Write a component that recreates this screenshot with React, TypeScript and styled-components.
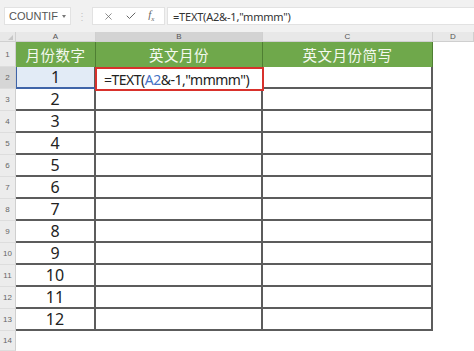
import styled, { createGlobalStyle } from 'styled-components';
import { X, Check } from 'lucide-react';

const GlobalStyle = createGlobalStyle`
  html, body {
    margin: 0;
    padding: 0;
    background: #ffffff;
    overflow: hidden;
  }
  body {
    font-family: "Noto Sans", "Noto Sans CJK SC", sans-serif;
  }
`;

const numbers = [1, 2, 3, 4, 5, 6, 7, 8, 9, 10, 11, 12];

export default function App() {
  return (
    <>
      <GlobalStyle />
      <Page>
        <Toolbar>
          <NameBox>
            <span>COUNTIF</span>
            <Caret />
          </NameBox>
          <Grip>⋮</Grip>
          <FuncBox>
            <X size={11} strokeWidth={1.6} color="#666" />
            <Check size={12} strokeWidth={2} color="#666" />
            <Fx>
              f<sub>x</sub>
            </Fx>
          </FuncBox>
          <FormulaInput>=TEXT(A2&amp;-1,"mmmm")</FormulaInput>
        </Toolbar>

        <Sheet>
          <Corner>
            <CornerMark />
          </Corner>
          <ColHeader>A</ColHeader>
          <ColHeader selected>B</ColHeader>
          <ColHeader>C</ColHeader>
          <ColHeader>D</ColHeader>

          <RowHeader>1</RowHeader>
          <TitleCell>月份数字</TitleCell>
          <TitleCell>英文月份</TitleCell>
          <TitleCell>英文月份简写</TitleCell>
          <EmptyCell />

          {numbers.map((n, i) => (
            <Row key={n} n={n} first={i === 0} />
          ))}

          <RowHeader>14</RowHeader>
          <EmptyCell />
          <EmptyCell />
          <EmptyCell />
          <EmptyCell />
        </Sheet>
      </Page>
    </>
  );
}

const Row = ({ n, first }: { n: number; first: boolean }) => (
  <>
    <RowHeader selected={first}>{n + 1}</RowHeader>
    <NumCell referenced={first}>{n}</NumCell>
    {first ? (
      <EditCell>
        =TEXT(<Ref>A2</Ref>&amp;-1,"mmmm")
      </EditCell>
    ) : (
      <DataCell />
    )}
    <DataCell />
    <EmptyCell />
  </>
);

const Page = styled.div`
  width: 474px;
  height: 351px;
  display: flex;
  flex-direction: column;
  overflow: hidden;
`;

const Toolbar = styled.div`
  height: 32px;
  flex-shrink: 0;
  display: flex;
  align-items: center;
  background: #f1f1f1;
  padding: 0 0 0 4px;
  box-sizing: border-box;
`;

const NameBox = styled.div`
  width: 67px;
  height: 18px;
  display: flex;
  align-items: center;
  justify-content: space-between;
  background: #ffffff;
  border: 1px solid #e2e2e2;
  box-sizing: border-box;
  padding: 0 4px 0 4px;
  font-family: "Liberation Sans", sans-serif;
  font-size: 11px;
  color: #555;
`;

const Caret = styled.span`
  width: 0;
  height: 0;
  border-left: 2.5px solid transparent;
  border-right: 2.5px solid transparent;
  border-top: 3px solid #777;
`;

const Grip = styled.span`
  width: 21px;
  text-align: center;
  color: #c4c4c4;
  font-size: 10px;
`;

const FuncBox = styled.div`
  width: 73px;
  height: 18px;
  display: flex;
  align-items: center;
  justify-content: space-around;
  background: #ffffff;
  border: 1px solid #e2e2e2;
  box-sizing: border-box;
  padding: 0 4px;
`;

const Fx = styled.span`
  font-family: "Liberation Serif", serif;
  font-style: italic;
  font-size: 11px;
  color: #666;

  sub {
    font-size: 7px;
  }
`;

const FormulaInput = styled.div`
  flex: 1;
  height: 18px;
  margin-left: 2px;
  display: flex;
  align-items: center;
  padding-left: 5px;
  background: #ffffff;
  border: 1px solid #e2e2e2;
  border-right: none;
  box-sizing: border-box;
  font-family: "Noto Sans", sans-serif;
  font-size: 11px;
  letter-spacing: -0.2px;
  color: #333;
`;

const Sheet = styled.div`
  flex: 1;
  display: grid;
  grid-template-columns: 16px 80px 167px 170px 1fr;
  grid-template-rows: 10px 25px repeat(12, 22px) 1fr;
`;

const Corner = styled.div`
  background: #e8e8e8;
  border-right: 1px solid #d0d0d0;
  border-bottom: 1px solid #d0d0d0;
  box-sizing: border-box;
  position: relative;
`;

const CornerMark = styled.span`
  position: absolute;
  right: 2px;
  bottom: 1px;
  width: 0;
  height: 0;
  border-left: 5px solid transparent;
  border-bottom: 5px solid #c6c6c6;
`;

const ColHeader = styled.div<{ selected?: boolean }>`
  background: ${({ selected }) => (selected ? '#d3d3d3' : '#e8e8e8')};
  border-right: 1px solid #d0d0d0;
  border-bottom: 1px solid #cfcfcf;
  box-sizing: border-box;
  display: flex;
  align-items: center;
  justify-content: center;
  font-family: "Liberation Sans", sans-serif;
  font-size: 8px;
  color: #555;
`;

const RowHeader = styled.div<{ selected?: boolean }>`
  background: ${({ selected }) => (selected ? '#d6d6d6' : '#ececec')};
  border-right: 1px solid #cfcfcf;
  border-bottom: 1px solid #dddddd;
  box-sizing: border-box;
  display: flex;
  align-items: center;
  justify-content: center;
  font-family: "Liberation Sans", sans-serif;
  font-size: 8px;
  color: #666;
`;

const TitleCell = styled.div`
  background: #6fa84b;
  border-right: 1px solid #4f7f33;
  box-sizing: border-box;
  display: flex;
  align-items: center;
  justify-content: center;
  font-family: "Noto Sans CJK SC", sans-serif;
  font-size: 14.5px;
  letter-spacing: 0.5px;
  color: #f4f9ef;
`;

const DataCell = styled.div`
  border-right: 2px solid #5c5c5c;
  border-bottom: 2px solid #5c5c5c;
  box-sizing: border-box;
`;

const NumCell = styled.div<{ referenced?: boolean }>`
  background: ${({ referenced }) => (referenced ? '#e2ebf6' : '#ffffff')};
  border-right: 2px solid #5c5c5c;
  border-bottom: 2px solid ${({ referenced }) => (referenced ? '#3f64a8' : '#5c5c5c')};
  border-left: ${({ referenced }) => (referenced ? '1px solid #3f64a8' : 'none')};
  box-sizing: border-box;
  display: flex;
  align-items: center;
  justify-content: center;
  font-family: "Noto Sans", sans-serif;
  font-size: 16px;
  color: #222;
`;

const EditCell = styled.div`
  border: 2px solid #d8312c;
  margin: 0 -1px -2px -1px;
  box-sizing: border-box;
  display: flex;
  align-items: center;
  padding-left: 7px;
  font-family: "Noto Sans", sans-serif;
  font-size: 14px;
  letter-spacing: -0.5px;
  color: #222;
  position: relative;
  z-index: 1;
  background: #ffffff;
`;

const Ref = styled.span`
  color: #4472c4;
`;

const EmptyCell = styled.div`
  background: #ffffff;
`;
